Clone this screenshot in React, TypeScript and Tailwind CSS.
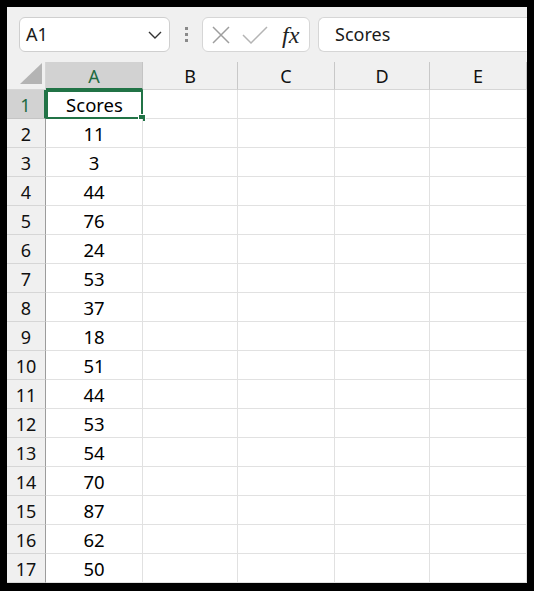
const columns = [
  { label: "A", width: "w-[97px]" },
  { label: "B", width: "w-[95px]" },
  { label: "C", width: "w-[97px]" },
  { label: "D", width: "w-[95px]" },
  { label: "E", width: "w-[97px]" },
];

const scores = ["Scores", "11", "3", "44", "76", "24", "53", "37", "18", "51", "44", "53", "54", "70", "87", "62", "50"];

function Toolbar() {
  return (
    <div className="flex h-[55px] shrink-0 items-start gap-0 bg-[#f0f0f0] pl-[12px] pt-[10px]">
      <div className="flex h-[35px] w-[151px] items-center justify-between rounded-[6px] border border-[#cfcfcf] bg-white pl-[6px] pr-[7px]">
        <span className="text-[18px] text-[#1a1a1a]">A1</span>
        <svg width="14" height="8" viewBox="0 0 14 8" className="mt-[1px]">
          <path d="M1 1 L7 7 L13 1" fill="none" stroke="#333" strokeWidth="1.4" />
        </svg>
      </div>
      <div className="flex h-[35px] w-[32px] flex-col items-center justify-center gap-[3px]">
        <span className="h-[3px] w-[3px] bg-[#8a8a8a]" />
        <span className="h-[3px] w-[3px] bg-[#8a8a8a]" />
        <span className="h-[3px] w-[3px] bg-[#8a8a8a]" />
      </div>
      <div className="flex h-[35px] w-[108px] items-center rounded-[6px] border border-[#d6d6d6] bg-white pl-[9px]">
        <svg width="18" height="18" viewBox="0 0 18 18">
          <path d="M1 1 L17 17 M17 1 L1 17" fill="none" stroke="#9e9e9e" strokeWidth="1.5" />
        </svg>
        <svg width="26" height="20" viewBox="0 0 26 20" className="ml-[12px]">
          <path d="M1 10 L9 18 L25 2" fill="none" stroke="#b4b4b4" strokeWidth="1.5" />
        </svg>
        <span className="ml-[14px] font-['Liberation_Serif',serif] text-[24px] italic leading-none text-[#222]">fx</span>
      </div>
      <div className="ml-[8px] flex h-[35px] flex-1 items-center rounded-l-[6px] border border-r-0 border-[#d6d6d6] bg-white pl-[16px]">
        <span className="text-[18px] text-[#1a1a1a]">Scores</span>
      </div>
    </div>
  );
}

function HeaderRow() {
  return (
    <div className="flex h-[28px] shrink-0 bg-[#f0f0f0]">
      <div className="relative h-full w-[39px] border-r border-b border-[#d6d6d6]">
        <svg width="22" height="21" viewBox="0 0 22 21" className="absolute right-[3px] bottom-[5px]">
          <path d="M0 21 L22 0 L22 21 Z" fill="#b4b4b4" />
        </svg>
      </div>
      {columns.map((col, i) => (
        <div
          key={col.label}
          className={`${col.width} flex h-full items-center justify-center border-r pt-[2px] text-[18px] ${
            i === 0
              ? "border-[#c4c4c4] border-b-2 border-b-[#217346] bg-[#d2d2d2] text-[#1e6b41]"
              : "border-b border-[#c8c8c8] border-b-[#d6d6d6] text-[#111]"
          }`}
        >
          {col.label}
        </div>
      ))}
    </div>
  );
}

function Row({ index, value }: { index: number; value: string }) {
  const selected = index === 1;
  return (
    <div className="flex h-[29px] shrink-0">
      <div
        className={`flex w-[39px] items-center justify-center border-r border-b pt-[2px] text-[18px] ${
          selected
            ? "border-[#c4c4c4] border-r-2 border-r-[#217346] bg-[#d2d2d2] text-[#1e6b41]"
            : "border-[#d6d6d6] border-r-[#9c9c9c] bg-[#f0f0f0] text-[#111]"
        }`}
      >
        {index}
      </div>
      <div
        className={`relative flex w-[97px] items-center justify-center bg-white text-[18.5px] text-black ${
          selected ? "border-2 border-[#217346] pt-[1px]" : "border-r border-b border-[#e1e1e1] pt-[2px]"
        }`}
      >
        {value}
        {selected ? (
          <span className="absolute -right-[5px] -bottom-[5px] h-[8px] w-[8px] border border-white bg-[#217346]" />
        ) : null}
      </div>
      {columns.slice(1).map((col) => (
        <div key={col.label} className={`${col.width} border-r border-b border-[#e1e1e1] bg-white`} />
      ))}
    </div>
  );
}

export default function App() {
  return (
    <div className="h-[591px] w-[534px] bg-black pt-[7px] pr-[7px] pb-[8px] pl-[7px] font-['Noto_Sans','Open_Sans',sans-serif]">
      <div className="flex h-[576px] w-[520px] flex-col overflow-hidden bg-white">
        <Toolbar />
        <HeaderRow />
        {scores.map((value, i) => (
          <Row key={i} index={i + 1} value={value} />
        ))}
      </div>
    </div>
  );
}
